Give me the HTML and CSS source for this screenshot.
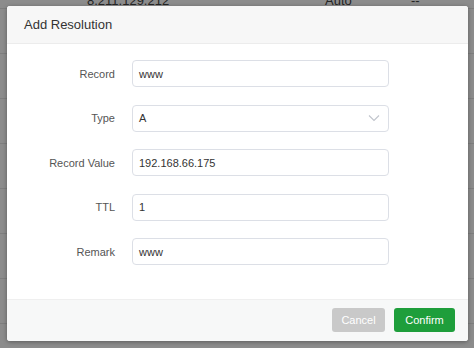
FILE: index.html
```html
<!DOCTYPE html>
<html lang="en">
<head>
  <meta charset="UTF-8">
  <meta name="viewport" content="width=device-width, initial-scale=1.0">
  <title>Add Resolution</title>
  <link rel="stylesheet" href="styles.css">
</head>
<body>

  <!-- tabla de fondo (queda tapada por el modal) -->
  <div class="table">
    <div class="row">
      <span class="cell cell-ip">8.211.129.212</span>
      <span class="cell cell-ttl">Auto</span>
      <span class="cell cell-remark">--</span>
    </div>
    <div class="row"></div>
    <div class="row"></div>
    <div class="row"></div>
    <div class="row"></div>
    <div class="row"></div>
    <div class="row"></div>
    <div class="row"></div>
  </div>

  <div class="overlay">
    <div class="modal">
      <div class="modal-header">Add Resolution</div>

      <div class="modal-body">
        <div class="form-row">
          <label class="form-label">Record</label>
          <div class="input">www</div>
        </div>
        <div class="form-row">
          <label class="form-label">Type</label>
          <div class="input select">
            <span>A</span>
            <svg class="chevron" width="12" height="8" viewBox="0 0 12 8">
              <path d="M1 1.5 L6 6.5 L11 1.5" fill="none" stroke="#c0c4cc" stroke-width="1.1"/>
            </svg>
          </div>
        </div>
        <div class="form-row">
          <label class="form-label">Record Value</label>
          <div class="input">192.168.66.175</div>
        </div>
        <div class="form-row">
          <label class="form-label">TTL</label>
          <div class="input">1</div>
        </div>
        <div class="form-row">
          <label class="form-label">Remark</label>
          <div class="input">www</div>
        </div>
      </div>

      <div class="modal-footer">
        <button class="btn btn-cancel">Cancel</button>
        <button class="btn btn-confirm">Confirm</button>
      </div>
    </div>
  </div>

</body>
</html>
```

FILE: styles.css
```css
body {
  margin: 0;
  width: 474px;
  height: 348px;
  overflow: hidden;
  position: relative;
  background: #fff;
  font-family: 'Liberation Sans', Arial, sans-serif;
  color: #333;
}

/* tabla del fondo */
.table {
  margin-top: -12px;
}

.row {
  height: 44px;
  border-bottom: 1px solid #e6e6e6;
  display: flex;
  align-items: center;
  font-size: 13px;
  color: #444;
}

.row:first-child {
  height: 20px;
  align-items: flex-end;
}

.cell-ip {
  margin-left: 87px;
  width: 238px;
}

.cell-ttl {
  width: 86px;
}

/* capa oscura + modal */
.overlay {
  position: absolute;
  inset: 0;
  background: rgba(0, 0, 0, 0.45);
  padding: 6px 0 0 7px;
}

.modal {
  width: 461px;
  height: 335px;
  background: #fff;
  border-radius: 3px;
  box-shadow: 0 1px 4px rgba(0, 0, 0, 0.35);
  display: flex;
  flex-direction: column;
  overflow: hidden;
}

.modal-header {
  height: 37px;
  background: #f7f7f7;
  border-bottom: 1px solid #ececec;
  padding-left: 17px;
  font-size: 13px;
  line-height: 37px;
  color: #333;
}

.modal-body {
  flex: 1;
  padding-top: 16px;
  display: flex;
  flex-direction: column;
  gap: 17.5px;
}

.form-row {
  display: flex;
  align-items: center;
  gap: 17px;
}

.form-label {
  width: 108px;
  text-align: right;
  font-size: 11px;
  color: #555;
}

.input {
  box-sizing: border-box;
  width: 257px;
  height: 27px;
  border: 1px solid #dcdfe6;
  border-radius: 4px;
  padding: 0 6px;
  display: flex;
  align-items: center;
  font-size: 11px;
  color: #333;
}

.select {
  justify-content: space-between;
  padding-right: 8px;
}

.modal-footer {
  height: 42px;
  box-sizing: border-box;
  background: #f7f8f8;
  border-top: 1px solid #efefef;
  display: flex;
  justify-content: flex-end;
  align-items: center;
  gap: 9px;
  padding: 0 13px 2px 0;
}

.btn {
  height: 24px;
  border: none;
  border-radius: 3px;
  color: #fff;
  font-family: inherit;
  font-size: 11px;
  padding: 0;
}

.btn-cancel {
  width: 53px;
  background: #c9c9c9;
}

.btn-confirm {
  width: 61px;
  background: #1e9e3b;
}
```
